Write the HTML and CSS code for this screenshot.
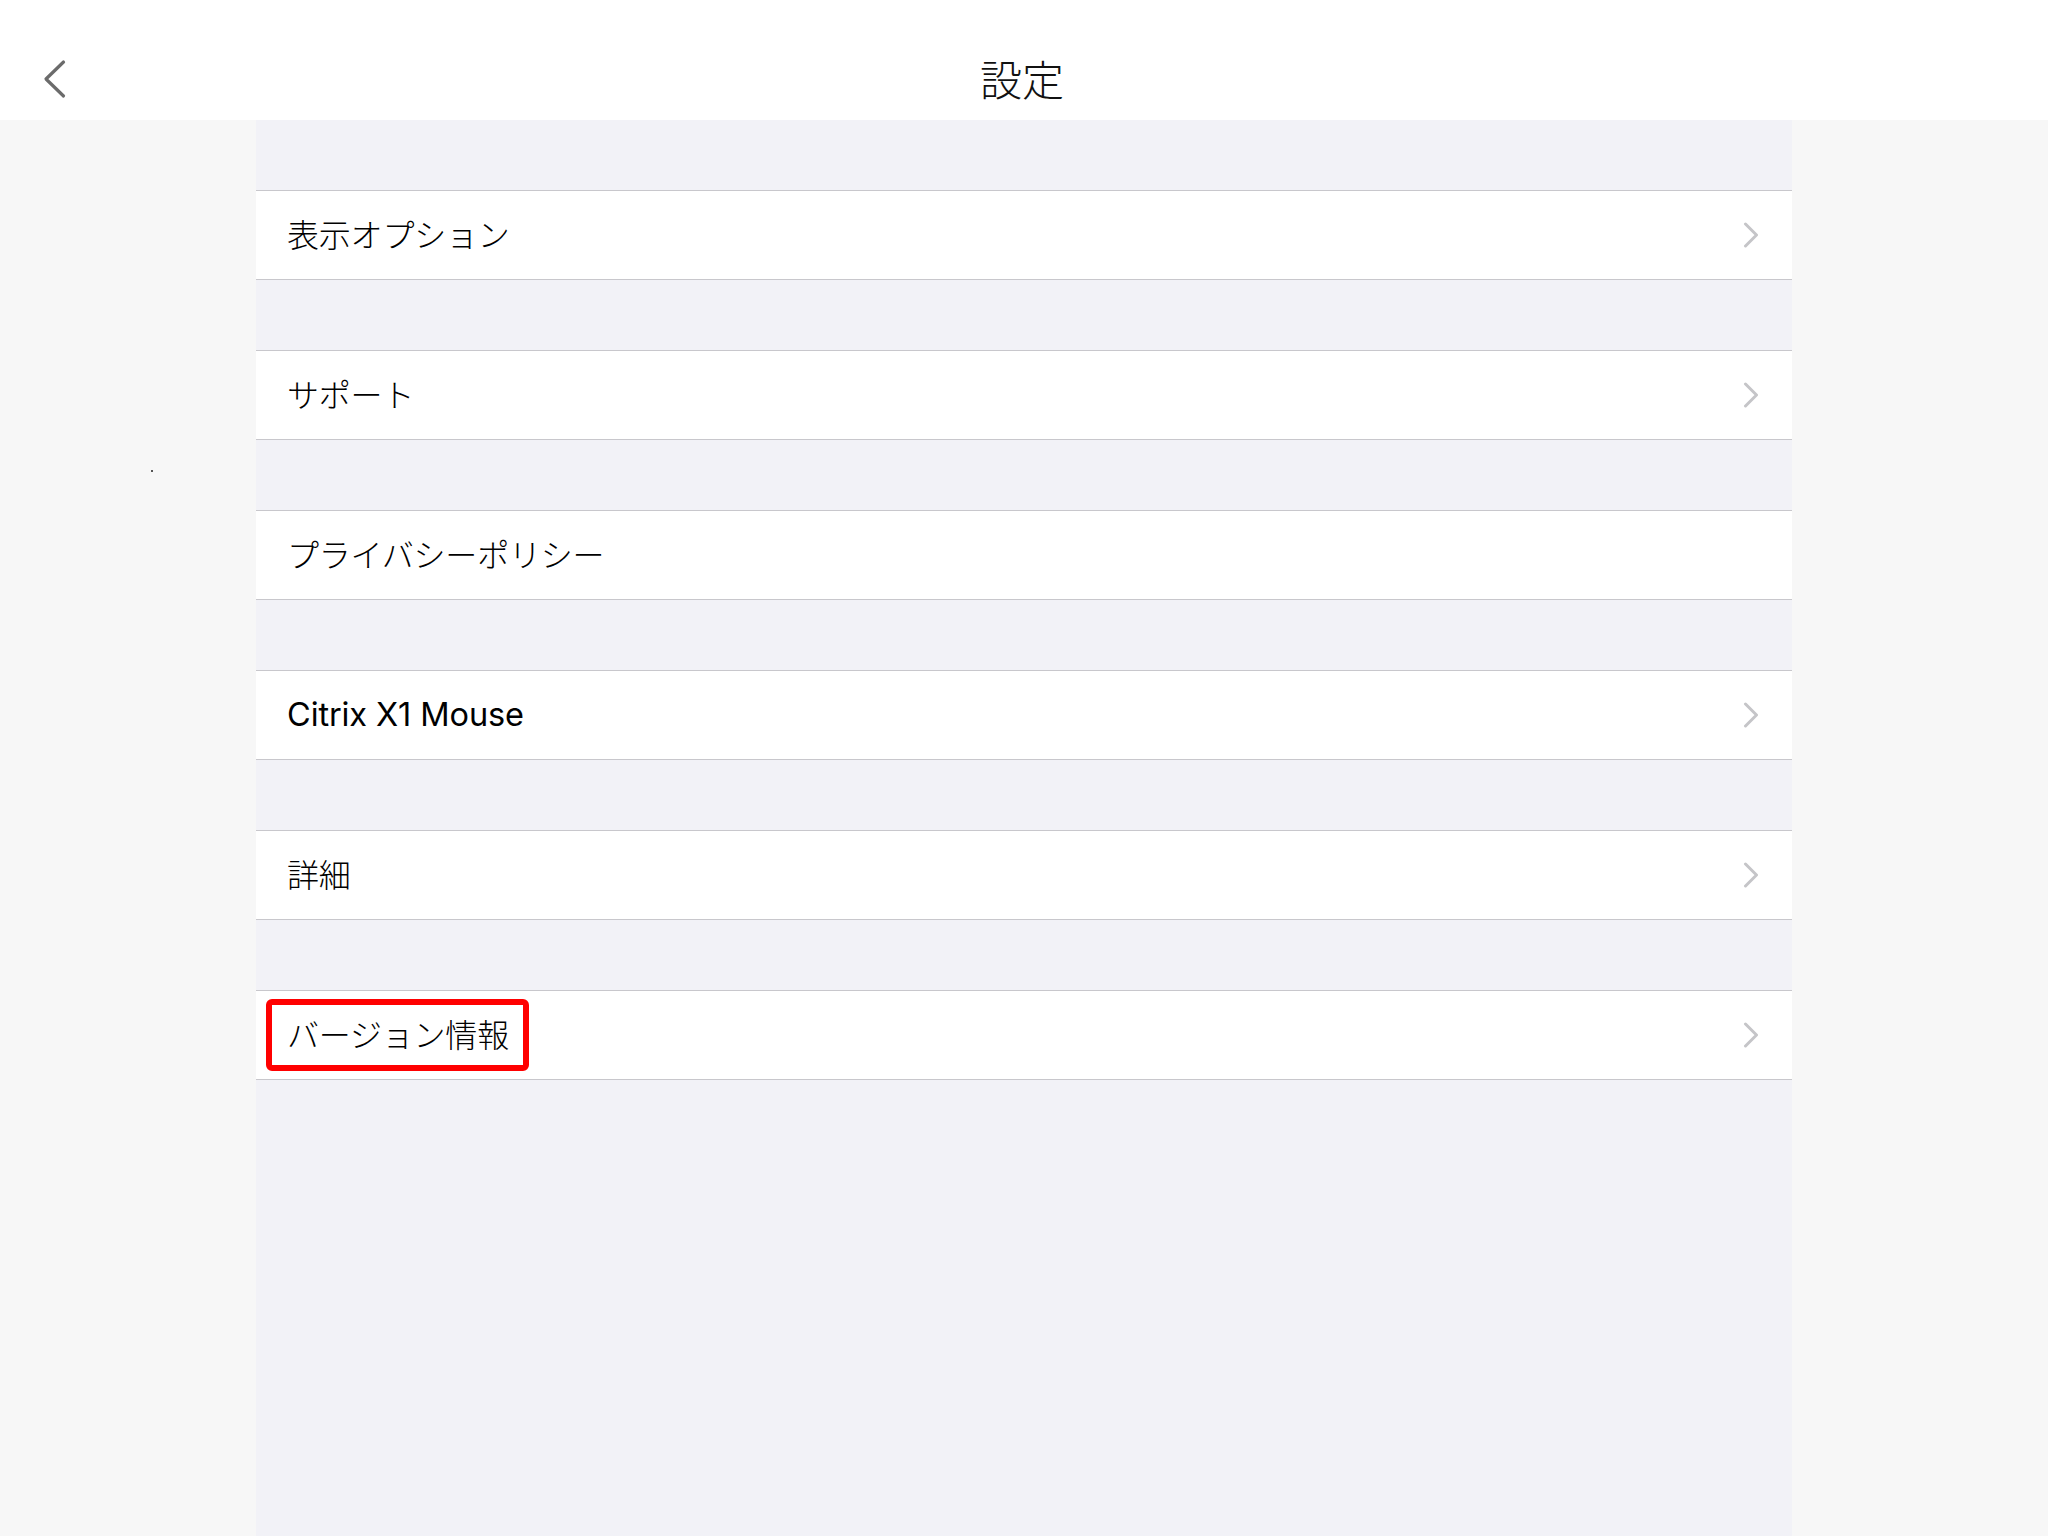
FILE: index.html
```html
<!DOCTYPE html>
<html lang="ja">
<head>
<meta charset="utf-8">
<title>設定</title>
<link rel="stylesheet" href="styles.css">
</head>
<body>
<div class="screen">
  <header class="navbar">
    <button class="back" aria-label="戻る">
      <svg width="24" height="40" viewBox="0 0 24 40"><polyline points="20.5,3 3,20 20.5,37" fill="none" stroke="#6b6b6b" stroke-width="3.2" stroke-linecap="round" stroke-linejoin="round"/></svg>
    </button>
    <h1 class="title">設定</h1>
  </header>
  <div class="body">
    <aside class="side"><span class="speck"></span></aside>
    <main class="list">
      <section class="group">
        <div class="cell"><span class="label">表示オプション</span><svg class="chev" width="16" height="26" viewBox="0 0 16 26"><polyline points="2.5,2 13.5,13 2.5,24" fill="none" stroke="#c5c5c8" stroke-width="3" stroke-linecap="round" stroke-linejoin="round"/></svg></div>
      </section>
      <section class="group">
        <div class="cell"><span class="label">サポート</span><svg class="chev" width="16" height="26" viewBox="0 0 16 26"><polyline points="2.5,2 13.5,13 2.5,24" fill="none" stroke="#c5c5c8" stroke-width="3" stroke-linecap="round" stroke-linejoin="round"/></svg></div>
      </section>
      <section class="group">
        <div class="cell"><span class="label">プライバシーポリシー</span></div>
      </section>
      <section class="group">
        <div class="cell"><span class="label latin">Citrix X1 Mouse</span><svg class="chev" width="16" height="26" viewBox="0 0 16 26"><polyline points="2.5,2 13.5,13 2.5,24" fill="none" stroke="#c5c5c8" stroke-width="3" stroke-linecap="round" stroke-linejoin="round"/></svg></div>
      </section>
      <section class="group">
        <div class="cell"><span class="label">詳細</span><svg class="chev" width="16" height="26" viewBox="0 0 16 26"><polyline points="2.5,2 13.5,13 2.5,24" fill="none" stroke="#c5c5c8" stroke-width="3" stroke-linecap="round" stroke-linejoin="round"/></svg></div>
      </section>
      <section class="group">
        <div class="cell highlighted"><span class="label">バージョン情報</span><svg class="chev" width="16" height="26" viewBox="0 0 16 26"><polyline points="2.5,2 13.5,13 2.5,24" fill="none" stroke="#c5c5c8" stroke-width="3" stroke-linecap="round" stroke-linejoin="round"/></svg><span class="callout"></span></div>
      </section>
    </main>
    <aside class="side"></aside>
  </div>
</div>
</body>
</html>
```

FILE: styles.css
```css
html, body {
  margin: 0;
  padding: 0;
  background: #ffffff;
}

.screen {
  width: 2048px;
  height: 1536px;
  display: flex;
  flex-direction: column;
  font-family: "Inter", "Noto Sans CJK JP", sans-serif;
  color: #000000;
  overflow: hidden;
}

.navbar {
  height: 120px;
  flex: none;
  background: #ffffff;
  position: relative;
  display: flex;
  align-items: center;
  justify-content: center;
}

.back {
  position: absolute;
  left: 43px;
  top: 59px;
  width: 24px;
  height: 40px;
  padding: 0;
  margin: 0;
  border: 0;
  background: none;
  display: block;
}

.back svg {
  display: block;
}

.title {
  margin: 36px 0 0 0;
  font-family: "Noto Sans CJK JP", sans-serif;
  font-weight: 300;
  font-size: 42px;
  line-height: 1;
  color: #111111;
  transform: translateX(-2px);
}

.body {
  flex: 1;
  display: flex;
}

.side {
  width: 256px;
  flex: none;
  background: #f7f7f7;
  position: relative;
}

.speck {
  position: absolute;
  left: 151px;
  top: 350px;
  width: 2px;
  height: 2px;
  background: #555555;
}

.list {
  width: 1536px;
  flex: none;
  background: #f2f2f7;
  padding-top: 70px;
  box-sizing: border-box;
}

.group {
  border-top: 1px solid #c8c7cc;
  border-bottom: 1px solid #c8c7cc;
  background: #ffffff;
  margin-bottom: 70px;
}

.cell {
  height: 88px;
  display: flex;
  align-items: center;
  padding: 0 34px 0 31px;
  position: relative;
}

.label {
  flex: 1;
  font-family: "Noto Sans CJK JP", sans-serif;
  font-size: 32px;
  line-height: 1;
  font-weight: 300;
  color: #000000;
  letter-spacing: -0.2px;
  padding-bottom: 5px;
}

.label.latin {
  font-family: "Inter", "Noto Sans CJK JP", sans-serif;
  font-weight: 400;
  font-size: 32.5px;
  letter-spacing: -0.1px;
  padding-bottom: 0;
}

.chev {
  display: block;
  flex: none;
  margin-right: -1px;
}

.callout {
  position: absolute;
  left: 10px;
  top: 8px;
  width: 263px;
  height: 72px;
  box-sizing: border-box;
  border: 6px solid #ff0000;
  border-radius: 6px;
}
```
